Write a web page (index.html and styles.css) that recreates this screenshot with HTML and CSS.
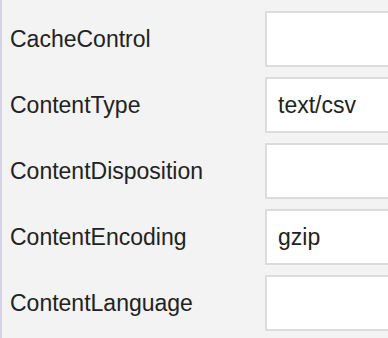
FILE: index.html
```html
<!DOCTYPE html>
<html>
<head>
<title>Headers</title>
<link rel="stylesheet" href="styles.css">
</head>
<body>
<div class="props">
	<div class="prop_row">
		<label class="prop_name">CacheControl</label>
		<input class="prop_value" type="text" value="">
	</div>
	<div class="prop_row">
		<label class="prop_name">ContentType</label>
		<input class="prop_value" type="text" value="text/csv">
	</div>
	<div class="prop_row">
		<label class="prop_name">ContentDisposition</label>
		<input class="prop_value" type="text" value="">
	</div>
	<div class="prop_row">
		<label class="prop_name">ContentEncoding</label>
		<input class="prop_value" type="text" value="gzip">
	</div>
	<div class="prop_row">
		<label class="prop_name">ContentLanguage</label>
		<input class="prop_value" type="text" value="">
	</div>
</div>
</body>
</html>
```
FILE: styles.css
```css
html, body {
	margin: 0;
	height: 100%;
	background: #f3f3f3;
}
body {
	font-family: "Liberation Sans", Arial, sans-serif;
	color: #222;
	overflow: hidden;
}
.props {
	border-left: 2px solid #d6d3e4;
	padding: 11px 0 0 8px;
	display: flex;
	flex-direction: column;
	gap: 10px;
	min-height: 100%;
	box-sizing: border-box;
}
.prop_row {
	display: flex;
	align-items: center;
	height: 56px;
}
.prop_name {
	width: 255px;
	flex: none;
	font-size: 23px;
}
.prop_value {
	flex: 1;
	min-width: 0;
	height: 56px;
	box-sizing: border-box;
	border: 2px solid #dcdcdc;
	border-right: none;
	background: #fff;
	padding: 0 0 0 11px;
	font-family: "Liberation Sans", Arial, sans-serif;
	font-size: 23px;
	color: #222;
	outline: none;
}
```
